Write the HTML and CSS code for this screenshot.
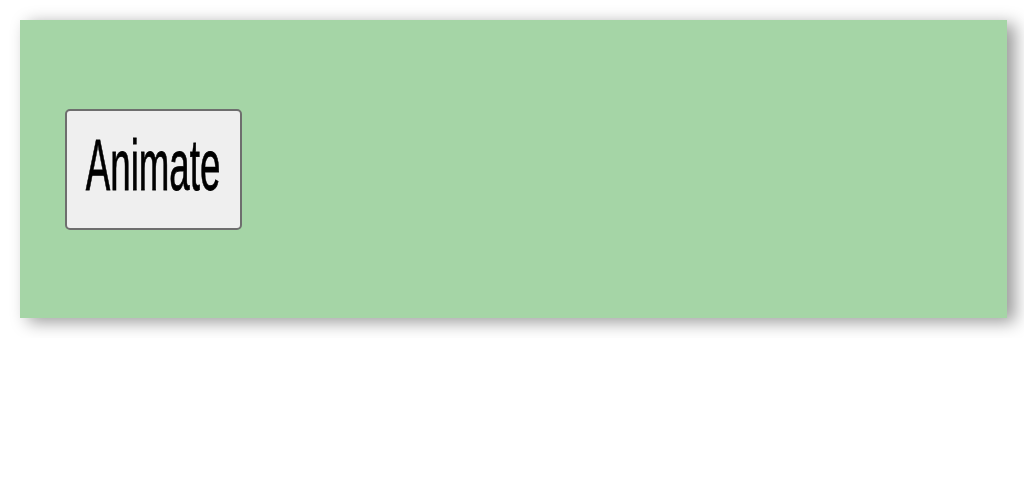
FILE: index.html
```html
<!DOCTYPE html>
<html>
<head>
<meta charset="utf-8">
<link rel="stylesheet" href="styles.css">
</head>
<body>
<div class="panel">
  <button class="btn"><span class="label">Animate</span></button>
</div>
</body>
</html>
```
FILE: styles.css
```css
html, body {
  margin: 0;
  padding: 0;
  background: #ffffff;
}
body {
  padding: 20px;
}
.panel {
  width: 987px;
  height: 298px;
  box-sizing: border-box;
  background: #a5d5a6;
  box-shadow: 8px 4px 16px rgba(0, 0, 0, 0.4);
  display: flex;
  align-items: center;
  padding-left: 45px;
}
.btn {
  width: 177px;
  height: 121px;
  box-sizing: border-box;
  border: 2px solid #6e6e6e;
  border-radius: 5px;
  background: #efefef;
  padding: 0;
  margin: 0;
  display: flex;
  align-items: center;
  justify-content: center;
  overflow: hidden;
}
.label {
  display: inline-block;
  font-family: "Liberation Sans", Arial, sans-serif;
  font-size: 72px;
  line-height: 1;
  color: #000;
  transform: scaleX(0.51);
  white-space: nowrap;
  margin-top: -8px;
  -webkit-text-stroke: 0.8px #000;
}
```
